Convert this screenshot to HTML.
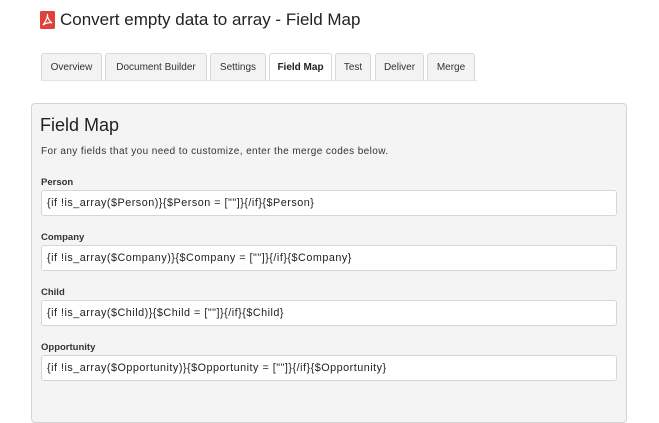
<!DOCTYPE html>
<html><head><style>
body{margin:0;width:659px;height:400px;overflow:hidden;background:#fff;font-family:"Liberation Sans",sans-serif;color:#222;position:relative}
.a{position:absolute}
h1{position:absolute;left:60px;top:10px;margin:0;font-size:17px;font-weight:normal;color:#222}
.tab{position:absolute;top:53px;height:27px;background:#f3f3f3;border:1px solid #d8d8d8;border-bottom:none;border-radius:3px 3px 0 0;font-size:10px;line-height:27px;text-align:center;color:#333;box-sizing:border-box}
.tab.on{background:#fff;font-weight:bold;color:#222}
.panel{position:absolute;left:31px;top:103px;width:596px;height:320px;background:#f4f4f4;border:1px solid #d4d4d4;border-radius:4px;box-sizing:border-box}
.lbl{position:absolute;left:41px;font-size:9.5px;font-weight:bold;color:#333}
.in{position:absolute;left:41px;width:576px;height:26px;background:#fff;border:1px solid #d6d6d6;border-radius:3px;box-sizing:border-box;font-size:10.8px;letter-spacing:0.5px;line-height:24px;padding-left:5px;color:#222}
</style></head><body>
<svg class="a" style="left:40px;top:11px" width="15" height="18" viewBox="0 0 15 18"><rect width="15" height="18" rx="1.5" fill="#e0413a"/><path d="M3 14 C6 10 8 6 7.5 3 C7 6 9 10 12 12 C9 11 6 12 3 14Z" fill="none" stroke="#fff" stroke-width="1.2"/></svg>
<h1>Convert empty data to array - Field Map</h1>
<div class="tab" style="left:41px;width:61px">Overview</div>
<div class="tab" style="left:105px;width:102px">Document Builder</div>
<div class="tab" style="left:210px;width:56px">Settings</div>
<div class="tab on" style="left:269px;width:63px">Field Map</div>
<div class="tab" style="left:335px;width:36px">Test</div>
<div class="tab" style="left:375px;width:49px">Deliver</div>
<div class="tab" style="left:427px;width:48px">Merge</div>
<div class="a" style="left:41px;top:80px;width:436px;height:1px;background:#e4e4e4"></div>
<div class="panel"></div>
<div class="a" style="left:40px;top:115px;font-size:18px;color:#222">Field Map</div>
<div class="a" style="left:41px;top:146px;font-size:10px;letter-spacing:0.4px;color:#333">For any fields that you need to customize, enter the merge codes below.</div>
<div class="lbl" style="top:177px">Person</div>
<div class="in" style="top:190px">{if !is_array($Person)}{$Person = [""]}{/if}{$Person}</div>
<div class="lbl" style="top:232px">Company</div>
<div class="in" style="top:245px">{if !is_array($Company)}{$Company = [""]}{/if}{$Company}</div>
<div class="lbl" style="top:287px">Child</div>
<div class="in" style="top:300px">{if !is_array($Child)}{$Child = [""]}{/if}{$Child}</div>
<div class="lbl" style="top:342px">Opportunity</div>
<div class="in" style="top:355px">{if !is_array($Opportunity)}{$Opportunity = [""]}{/if}{$Opportunity}</div>
</body></html>
